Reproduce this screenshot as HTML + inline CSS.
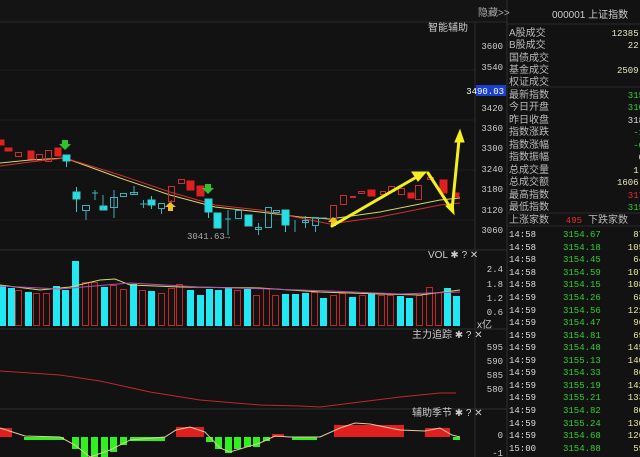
<!DOCTYPE html>
<html><head><meta charset="utf-8"><style>
body{margin:0;width:640px;height:457px;overflow:hidden;background:#111111;font-family:"Liberation Sans","Noto Sans CJK SC",sans-serif}
svg{position:absolute;left:0;top:0}
.t{font-family:"Liberation Mono","Noto Sans CJK SC",monospace;font-size:9px}
.c{font-family:"Liberation Sans","Noto Sans CJK SC",sans-serif;font-size:10px}
</style></head><body>
<svg width="640" height="457" viewBox="0 0 640 457">
<rect width="640" height="457" fill="#121212"/>
<rect x="0" y="0" width="507" height="22" fill="#141414"/>
<line x1="0" y1="22" x2="507" y2="22" stroke="#2a2a2a"/>
<!-- grid -->
<g stroke="#1d1d1d">
<line x1="0" y1="70" x2="475" y2="70"/><line x1="0" y1="120" x2="475" y2="120"/><line x1="0" y1="170" x2="475" y2="170"/><line x1="0" y1="220" x2="475" y2="220"/>
</g>
<g stroke="#2e2e2e">
<line x1="475" y1="22" x2="475" y2="457"/>
<line x1="507" y1="0" x2="507" y2="457"/>
<line x1="0" y1="250" x2="507" y2="250"/>
<line x1="0" y1="329" x2="507" y2="329"/>
<line x1="0" y1="409" x2="507" y2="409"/>
</g>
<text x="478" y="16" class="c" fill="#aaa" font-size="9">隐藏&gt;&gt;</text>
<text x="468" y="31" class="c" fill="#ccc" text-anchor="end" font-size="9">智能辅助</text>
<!-- axis labels -->
<g class="t" fill="#ccc" text-anchor="end" font-size="8">
<text x="503" y="49">3600</text><text x="503" y="70">3540</text><text x="503" y="111">3420</text><text x="503" y="131">3360</text><text x="503" y="151">3300</text><text x="503" y="172">3240</text><text x="503" y="192">3180</text><text x="503" y="213">3120</text><text x="503" y="233">3060</text>
<text x="503" y="272">2.4</text><text x="503" y="287">1.8</text><text x="503" y="301">1.2</text><text x="503" y="315">0.6</text>
<text x="503" y="350">595</text><text x="503" y="364">590</text><text x="503" y="378">585</text><text x="503" y="392">580</text>
<text x="503" y="438">0</text><text x="503" y="456">-1</text>
</g>
<text x="477" y="328" class="c" fill="#ccc" font-size="9">x亿</text>
<rect x="476" y="85" width="30" height="11" fill="#1a3fc8"/>
<text x="504" y="94" class="t" fill="#fff" text-anchor="end" font-size="8">3490.03</text>
<!-- MA lines -->
<polyline fill="none" stroke="#d6d66a" stroke-width="1" points="0,163 30,160 65,158 120,178 170,195 215,207 260,212 300,217 330,219 380,212 440,200 460,198"/>
<polyline fill="none" stroke="#d03030" stroke-width="1" points="0,166 30,162 65,158 120,175 170,192 215,205 260,210 300,218 330,224 380,217 440,205 460,203"/>
<!-- candles -->
<g stroke="#e02020" fill="#e02020">
<rect x="0" y="140" width="4" height="5"/><rect x="5" y="148" width="7" height="3"/><rect x="28" y="151" width="6" height="8"/><rect x="55" y="148" width="6" height="8"/>
<rect x="187" y="181" width="7" height="9"/><rect x="197" y="186" width="7" height="10"/><rect x="408" y="193" width="6" height="5"/><rect x="368" y="190" width="7" height="6"/><rect x="440" y="180" width="7" height="13"/><rect x="455" y="193" width="4" height="4"/>
</g>
<g stroke="#c83030" fill="none">
<rect x="15.5" y="152.5" width="6" height="4"/><rect x="36.5" y="154.5" width="6" height="6"/><rect x="45.5" y="150.5" width="6" height="11"/>
<rect x="168.5" y="186.5" width="6" height="15"/><line x1="171.5" y1="200" x2="171.5" y2="205"/><rect x="178.5" y="179.5" width="6" height="4"/>
<rect x="330.5" y="205.5" width="6" height="14"/><rect x="340.5" y="195.5" width="6" height="9"/><rect x="350.5" y="196.5" width="5" height="1"/><rect x="358.5" y="191.5" width="6" height="2"/><rect x="380.5" y="191.5" width="5" height="3"/><rect x="388.5" y="186.5" width="6" height="5"/><rect x="398.5" y="188.5" width="6" height="6"/><rect x="415.5" y="185.5" width="6" height="14"/><rect x="427.5" y="177.5" width="6" height="2"/>
</g>
<g stroke="#3cc8c8" fill="#22e0e8">
<rect x="63" y="155" width="7" height="6"/><line x1="66.5" y1="161" x2="66.5" y2="167"/>
<rect x="73" y="192" width="7" height="7"/><line x1="76.5" y1="187" x2="76.5" y2="212"/>
<rect x="100" y="206" width="7" height="4"/><rect x="148" y="200" width="7" height="5"/><line x1="151.5" y1="196" x2="151.5" y2="209"/>
<rect x="205" y="199" width="7" height="13"/><line x1="208.5" y1="212" x2="208.5" y2="218"/>
<rect x="214" y="213" width="7" height="15"/><rect x="245" y="215" width="7" height="11"/><rect x="282" y="210" width="7" height="15"/><line x1="285.5" y1="225" x2="285.5" y2="232"/>
</g>
<g stroke="#3cb0b8" fill="none">
<rect x="82.5" y="205.5" width="7" height="5"/><line x1="86" y1="211" x2="86" y2="220"/>
<line x1="95" y1="190" x2="95" y2="200"/><line x1="92" y1="193" x2="98" y2="193"/>
<line x1="103" y1="195" x2="103" y2="210"/>
<rect x="110.5" y="197.5" width="7" height="10"/><line x1="114" y1="190" x2="114" y2="218"/>
<rect x="120.5" y="193.5" width="6" height="3"/><rect x="130.5" y="192.5" width="7" height="2"/><line x1="134" y1="186" x2="134" y2="194"/>
<line x1="140" y1="204" x2="147" y2="204"/><line x1="143.5" y1="200" x2="143.5" y2="208"/>
<rect x="158.5" y="203.5" width="6" height="5"/><line x1="161.5" y1="208" x2="161.5" y2="214"/>
<line x1="228" y1="210" x2="228" y2="235"/><line x1="225" y1="219" x2="231" y2="219"/>
<rect x="235.5" y="210.5" width="6" height="8"/><rect x="255.5" y="227.5" width="6" height="2"/><line x1="258.5" y1="223" x2="258.5" y2="235"/>
<rect x="265.5" y="207.5" width="6" height="20"/><rect x="273.5" y="210.5" width="6" height="2"/>
<rect x="302.5" y="220.5" width="6" height="2"/><line x1="295" y1="220" x2="295" y2="232"/><line x1="305.5" y1="216" x2="305.5" y2="228"/>
<rect x="312.5" y="217.5" width="6" height="8"/><line x1="315.5" y1="225" x2="315.5" y2="232"/><line x1="320" y1="218" x2="327" y2="218"/>
</g>
<!-- signal arrows -->
<path d="M62,140h6v4h3l-6,6l-6,-6h3z" fill="#30c030"/>
<path d="M205,184h6v4h3l-6,6l-6,-6h3z" fill="#30c030"/>
<path d="M170,202l-5,5h3v4h5v-4h3z" fill="#f0c020"/>
<path d="M333,217l-5,5h3v4h5v-4h3z" fill="#f0c020"/>
<text x="187" y="239" class="t" fill="#aaa" font-size="8">3041.63→</text>
<!-- yellow hand drawn arrows -->
<g stroke="#f4f020" stroke-width="3" fill="#f4f020" stroke-linecap="round">
<line x1="332" y1="226" x2="420" y2="175"/>
<path d="M426,172l-14,0l6,9z" stroke-width="1"/>
<line x1="428" y1="173" x2="452" y2="210"/>
<path d="M454,214l-8,-8l7,-3z" stroke-width="1"/>
<line x1="452" y1="210" x2="459" y2="140"/>
<path d="M460,130l-5,12h9z" stroke-width="1"/>
</g>
<!-- VOL panel -->
<text x="428" y="258" class="c" fill="#ccc" font-size="8">VOL ✱ ? ✕</text>
<g fill="#22e8f4">
<rect x="0" y="285" width="6" height="41"/><rect x="8" y="288" width="7" height="38"/><rect x="25" y="292" width="7" height="34"/><rect x="53" y="286" width="7" height="40"/><rect x="62" y="290" width="7" height="36"/><rect x="72" y="261" width="7" height="65"/><rect x="101" y="287" width="7" height="39"/><rect x="130" y="284" width="7" height="42"/><rect x="148" y="291" width="7" height="35"/><rect x="187" y="290" width="7" height="36"/><rect x="197" y="295" width="7" height="31"/><rect x="206" y="289" width="7" height="37"/><rect x="215" y="290" width="7" height="36"/><rect x="225" y="288" width="7" height="38"/><rect x="244" y="289" width="7" height="37"/><rect x="282" y="294" width="7" height="32"/><rect x="292" y="294" width="7" height="32"/><rect x="302" y="293" width="7" height="33"/><rect x="320" y="298" width="7" height="28"/><rect x="349" y="297" width="7" height="29"/><rect x="368" y="294" width="7" height="32"/><rect x="397" y="296" width="7" height="30"/><rect x="406" y="298" width="7" height="28"/><rect x="444" y="288" width="7" height="38"/><rect x="453" y="296" width="7" height="30"/>
</g>
<g fill="none" stroke="#c02828">
<rect x="15.5" y="290.5" width="6" height="35"/><rect x="33.5" y="293.5" width="6" height="32"/><rect x="43.5" y="293.5" width="6" height="32"/><rect x="82.5" y="282.5" width="6" height="43"/><rect x="91.5" y="282.5" width="6" height="43"/><rect x="110.5" y="285.5" width="6" height="40"/><rect x="120.5" y="289.5" width="6" height="36"/><rect x="139.5" y="290.5" width="6" height="35"/><rect x="158.5" y="293.5" width="6" height="32"/><rect x="168.5" y="288.5" width="6" height="37"/><rect x="176.5" y="284.5" width="6" height="41"/><rect x="234.5" y="290.5" width="6" height="35"/><rect x="253.5" y="295.5" width="6" height="30"/><rect x="263.5" y="288.5" width="6" height="37"/><rect x="272.5" y="295.5" width="6" height="30"/><rect x="311.5" y="292.5" width="6" height="33"/><rect x="330.5" y="295.5" width="6" height="30"/><rect x="339.5" y="293.5" width="6" height="32"/><rect x="359.5" y="295.5" width="6" height="30"/><rect x="378.5" y="295.5" width="6" height="30"/><rect x="387.5" y="295.5" width="6" height="30"/><rect x="416.5" y="295.5" width="6" height="30"/><rect x="426.5" y="287.5" width="6" height="38"/><rect x="435.5" y="292.5" width="6" height="33"/>
</g>
<polyline fill="none" stroke="#d6d66a" points="0,285 40,290 70,287 100,280 115,279 130,285 180,287 260,288 320,292 380,294 420,295 460,290"/>
<polyline fill="none" stroke="#b050b0" points="0,286 60,289 130,283 200,287 270,289 330,291 400,294 460,292"/>
<!-- 主力追踪 -->
<text x="412" y="338" class="c" fill="#ccc" font-size="8">主力追踪 ✱ ? ✕</text>
<polyline fill="none" stroke="#c02828" points="0,371 60,375 100,381 150,392 200,400 260,405 300,406 320,407 360,402 400,397 440,393 456,393"/>
<!-- 辅助季节 -->
<text x="412" y="416" class="c" fill="#ccc" font-size="8">辅助季节 ✱ ? ✕</text>
<g fill="#e02020">
<rect x="0" y="428" width="12" height="9"/><rect x="176" y="427" width="28" height="10"/><rect x="272" y="434" width="12" height="3"/><rect x="334" y="425" width="70" height="12"/><rect x="425" y="428" width="25" height="9"/>
</g>
<g fill="#30f020">
<rect x="24" y="437" width="40" height="3"/><rect x="72" y="437" width="7" height="12"/><rect x="81" y="437" width="7" height="20"/><rect x="91" y="437" width="7" height="20"/><rect x="101" y="437" width="7" height="20"/><rect x="110" y="437" width="7" height="15"/><rect x="120" y="437" width="7" height="8"/><rect x="130" y="437" width="35" height="4"/><rect x="206" y="437" width="7" height="5"/><rect x="215" y="437" width="7" height="12"/><rect x="225" y="437" width="7" height="16"/><rect x="234" y="437" width="7" height="12"/><rect x="244" y="437" width="7" height="10"/><rect x="253" y="437" width="7" height="10"/><rect x="263" y="437" width="7" height="4"/><rect x="292" y="437" width="25" height="3"/><rect x="453" y="437" width="7" height="3"/>
</g>
<polyline fill="none" stroke="#e8c8a0" points="0,428 25,436 60,437 75,445 90,457 110,450 130,440 165,437 176,430 190,427 205,432 220,448 230,452 260,443 275,436 290,437 320,437 340,428 355,423 370,424 400,430 425,431 440,428 452,435 460,437"/>
<!-- right panel -->
<text x="552" y="18" class="c" fill="#ccc" font-size="9">000001  上证指数</text>
<line x1="507" y1="24" x2="640" y2="24" stroke="#2a2a2a"/>
<line x1="507" y1="87" x2="640" y2="87" stroke="#2a2a2a"/>
<line x1="507" y1="213" x2="640" y2="213" stroke="#2a2a2a"/>
<line x1="507" y1="226" x2="640" y2="226" stroke="#2a2a2a"/>
<g class="c" fill="#bbb" font-size="9.5">
<text x="509" y="36">A股成交</text><text x="509" y="48">B股成交</text><text x="509" y="61">国债成交</text><text x="509" y="73">基金成交</text><text x="509" y="85">权证成交</text><text x="509" y="98">最新指数</text><text x="509" y="110">今日开盘</text><text x="509" y="123">昨日收盘</text><text x="509" y="135">指数涨跌</text><text x="509" y="148">指数涨幅</text><text x="509" y="160">指数振幅</text><text x="509" y="173">总成交量</text><text x="509" y="185">总成交额</text><text x="509" y="198">最高指数</text><text x="509" y="210">最低指数</text><text x="509" y="223">上涨家数</text><text x="588" y="223">下跌家数</text>
</g>
<g class="t" font-size="9" text-anchor="end">
<text x="644" y="36" fill="#e8e8c0">12385.</text><text x="644" y="48" fill="#e8e8c0">22.</text><text x="644" y="73" fill="#e8e8c0">2509.</text>
<text x="644" y="98" fill="#30d030">315</text><text x="644" y="110" fill="#30d030">310</text><text x="644" y="123" fill="#ddd">318</text><text x="644" y="135" fill="#30d030">-1</text><text x="644" y="148" fill="#30d030">-0</text><text x="644" y="160" fill="#ddd">0</text><text x="644" y="173" fill="#e8e8c0">1.</text><text x="644" y="185" fill="#e8e8c0">1606.</text><text x="644" y="198" fill="#e03030">317</text><text x="644" y="210" fill="#30d030">315</text>
<text x="582" y="223" fill="#e03030">495</text>
</g>
<g class="t" font-size="9">
<g fill="#ddd">
<text x="509" y="237">14:58</text><text x="509" y="250">14:58</text><text x="509" y="262">14:58</text><text x="509" y="275">14:58</text><text x="509" y="287">14:58</text><text x="509" y="300">14:59</text><text x="509" y="313">14:59</text><text x="509" y="325">14:59</text><text x="509" y="338">14:59</text><text x="509" y="350">14:59</text><text x="509" y="363">14:59</text><text x="509" y="375">14:59</text><text x="509" y="388">14:59</text><text x="509" y="400">14:59</text><text x="509" y="413">14:59</text><text x="509" y="426">14:59</text><text x="509" y="438">14:59</text><text x="509" y="451">15:00</text>
</g>
<g fill="#30d030">
<text x="563" y="237">3154.67</text><text x="563" y="250">3154.18</text><text x="563" y="262">3154.45</text><text x="563" y="275">3154.59</text><text x="563" y="287">3154.15</text><text x="563" y="300">3154.26</text><text x="563" y="313">3154.56</text><text x="563" y="325">3154.47</text><text x="563" y="338">3154.81</text><text x="563" y="350">3154.48</text><text x="563" y="363">3155.13</text><text x="563" y="375">3154.33</text><text x="563" y="388">3155.19</text><text x="563" y="400">3155.21</text><text x="563" y="413">3154.82</text><text x="563" y="426">3155.24</text><text x="563" y="438">3154.68</text><text x="563" y="451">3154.88</text>
</g>
<g fill="#e8e8a0" text-anchor="end">
<text x="644" y="237">87</text><text x="644" y="250">105</text><text x="644" y="262">64</text><text x="644" y="275">107</text><text x="644" y="287">108</text><text x="644" y="300">68</text><text x="644" y="313">121</text><text x="644" y="325">96</text><text x="644" y="338">69</text><text x="644" y="350">145</text><text x="644" y="363">140</text><text x="644" y="375">86</text><text x="644" y="388">142</text><text x="644" y="400">133</text><text x="644" y="413">80</text><text x="644" y="426">130</text><text x="644" y="438">126</text><text x="644" y="451">59</text>
</g>
</g>
</svg>
</body></html>
